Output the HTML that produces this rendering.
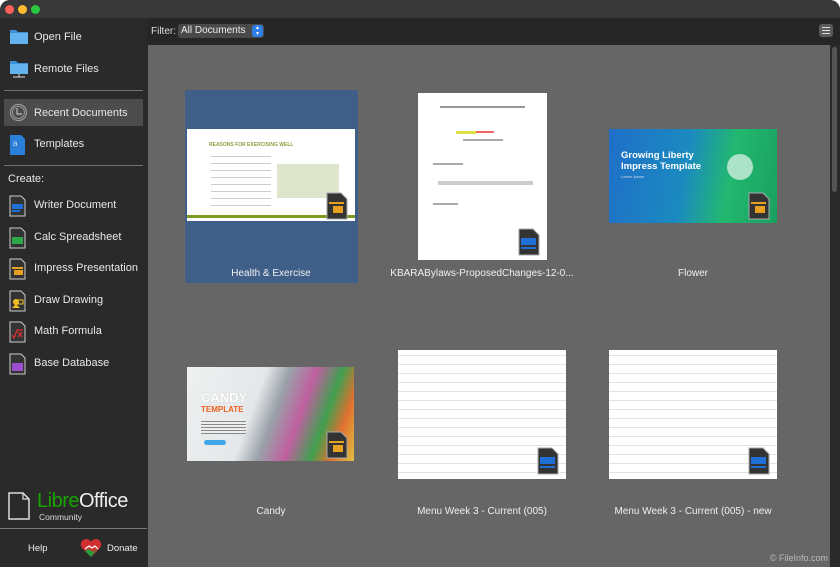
<!DOCTYPE html>
<html><head><style>
*{margin:0;padding:0;box-sizing:border-box}
body{width:840px;height:567px;background:#fff;font-family:"Liberation Sans",sans-serif;overflow:hidden;position:relative}
.win{position:absolute;left:0;top:0;width:840px;height:567px;background:#2a2a2a;border-radius:10px 10px 0 0;overflow:hidden}
.title{position:absolute;left:0;top:0;width:840px;height:18px;background:#383838}
.dot{position:absolute;top:5px;width:9px;height:9px;border-radius:50%}
.side{position:absolute;left:0;top:18px;width:147px;height:549px;background:#2a2a2a}
.it{position:absolute;left:34px;color:#e8e8e8;font-size:11px}
.ic{position:absolute;left:9px}
.sep{position:absolute;left:4px;width:139px;height:1px;background:#707070}
.tb{position:absolute;left:147px;top:18px;width:693px;height:27px;background:#262626}
.main{position:absolute;left:148px;top:45px;width:682px;height:522px;background:#666}
.lbl{position:absolute;color:#f0f0f0;font-size:10px;text-align:center;width:200px}
.page{position:absolute;background:#fff}
.doc{position:absolute;width:22px;height:28px}
.menu{background:repeating-linear-gradient(#fff 0 5px,#e2e2e2 5px 6px,#fff 6px 9px)}
</style></head><body>
<div class="win">
<div class="title">
<div class="dot" style="left:5px;background:#fe5f57"></div>
<div class="dot" style="left:18px;background:#febc2e"></div>
<div class="dot" style="left:31px;background:#28c840"></div>
</div>
<div class="side">
<svg class="ic" style="top:9px" width="20" height="18"><path d="M1 3h6l2 2h10v12H1z" fill="#3d8fd6"/><rect x="1" y="6" width="18" height="11" fill="#64b3ee"/></svg>
<div class="it" style="top:13px">Open File</div>
<svg class="ic" style="top:41px" width="20" height="20"><path d="M1 2h6l2 2h10v11H1z" fill="#3d8fd6"/><rect x="1" y="5" width="18" height="10" fill="#64b3ee"/><path d="M10 15v3M4 18h12" stroke="#ddd" stroke-width="1"/></svg>
<div class="it" style="top:45px">Remote Files</div>
<div class="sep" style="top:72px"></div>
<div style="position:absolute;left:4px;top:81px;width:139px;height:27px;background:#4c4c4c"></div>
<svg class="ic" style="top:85px" width="19" height="19"><circle cx="9.5" cy="9.5" r="8" fill="none" stroke="#999" stroke-width="1.2"/><circle cx="9.5" cy="9.5" r="6" fill="none" stroke="#999" stroke-width="1"/><path d="M8 5v6h5" stroke="#bbb" fill="none" stroke-width="1.2"/></svg>
<div class="it" style="top:89px">Recent Documents</div>
<svg class="ic" style="top:116px" width="18" height="22"><path d="M1 1h11l4 4v16H1z" fill="#2a7fd8"/><text x="4" y="12" font-size="8" fill="#cde">a</text></svg>
<div class="it" style="top:120px">Templates</div>
<div class="sep" style="top:147px"></div>
<div class="it" style="top:155px;left:8px">Create:</div>
<svg class="ic" style="top:177px" width="18" height="22"><path d="M1 1h11l4 4v16H1z" fill="#333" stroke="#ccc"/><rect x="3" y="9" width="11" height="5" fill="#1f6fd6"/><rect x="3" y="15" width="8" height="2" fill="#1f6fd6"/></svg>
<div class="it" style="top:181px">Writer Document</div>
<svg class="ic" style="top:209px" width="18" height="22"><path d="M1 1h11l4 4v16H1z" fill="#333" stroke="#ccc"/><rect x="3" y="10" width="11" height="7" fill="#2fa84a"/></svg>
<div class="it" style="top:213px">Calc Spreadsheet</div>
<svg class="ic" style="top:240px" width="18" height="22"><path d="M1 1h11l4 4v16H1z" fill="#333" stroke="#ccc"/><rect x="3" y="9" width="11" height="2" fill="#e8a020"/><rect x="5" y="12" width="9" height="5" fill="#e8a020"/></svg>
<div class="it" style="top:244px">Impress Presentation</div>
<svg class="ic" style="top:272px" width="18" height="22"><path d="M1 1h11l4 4v16H1z" fill="#333" stroke="#ccc"/><circle cx="7" cy="12" r="3" fill="#f0c020"/><path d="M3 18l4-4 4 4z" fill="#f0c020"/><rect x="9" y="10" width="5" height="4" fill="none" stroke="#f0c020"/></svg>
<div class="it" style="top:276px">Draw Drawing</div>
<svg class="ic" style="top:303px" width="18" height="22"><path d="M1 1h11l4 4v16H1z" fill="#333" stroke="#ccc"/><path d="M3 14l2 3 3-8h6M9 11l4 5M13 11l-4 5" stroke="#e03030" fill="none" stroke-width="1.3"/></svg>
<div class="it" style="top:307px">Math Formula</div>
<svg class="ic" style="top:335px" width="18" height="22"><path d="M1 1h11l4 4v16H1z" fill="#333" stroke="#ccc"/><rect x="3" y="10" width="11" height="8" fill="#9b4fcf"/></svg>
<div class="it" style="top:339px">Base Database</div>
<svg style="position:absolute;left:8px;top:474px" width="22" height="28"><path d="M1 1h14l6 6v20H1z" fill="none" stroke="#ddd" stroke-width="1.5"/><path d="M15 1v6h6" fill="none" stroke="#ddd" stroke-width="1.2"/></svg>
<div style="position:absolute;left:37px;top:472px;font-size:20px;color:#18a303;letter-spacing:-0.5px">Libre<span style="color:#eee">Office</span></div>
<div style="position:absolute;left:39px;top:494px;font-size:8.5px;color:#ddd">Community</div>
<div class="sep" style="top:510px;left:0;width:147px;background:#777"></div>
<div style="position:absolute;left:28px;top:525px;font-size:9.5px;color:#eee">Help</div>
<svg style="position:absolute;left:80px;top:520px" width="22" height="20"><path d="M11 19L2 10C-1 6 2 1 6 1c2 0 4 1 5 3 1-2 3-3 5-3 4 0 7 5 4 9z" fill="#d03030"/><path d="M11 19l-6-6 4-2 4 3 5-4z" fill="#2a9a3a"/><path d="M5 11l4-3 3 2 3-2 3 3" stroke="#fff" fill="none" stroke-width="1.2"/></svg>
<div style="position:absolute;left:107px;top:525px;font-size:9.5px;color:#eee">Donate</div>
</div>
<div class="tb">
<div style="position:absolute;left:4px;top:8px;color:#ddd;font-size:10px">Filter:</div>
<div style="position:absolute;left:31px;top:6px;width:86px;height:14px;background:#4a4a4a;border-radius:3px;color:#eee;font-size:10px;padding:1px 0 0 3px">All Documents
<div style="position:absolute;right:1px;top:1px;width:11px;height:12px;background:#2f7fe8;border-radius:3px;color:#fff;font-size:6px;line-height:6px;text-align:center">▴<br>▾</div></div>
<div style="position:absolute;left:672px;top:6px;width:14px;height:13px;background:#5a5a5a;border-radius:3px"><div style="position:absolute;left:3px;top:3px;width:8px;height:7px;border-top:1px solid #ddd;border-bottom:1px solid #ddd"></div><div style="position:absolute;left:3px;top:6px;width:8px;height:1px;background:#ddd"></div></div>
</div>
<div class="main"></div>
<div style="position:absolute;left:830px;top:45px;width:10px;height:522px;background:#2a2a2a"></div>
<div style="position:absolute;left:832px;top:47px;width:5px;height:145px;background:#555;border-radius:3px"></div>

<div style="position:absolute;left:185px;top:90px;width:173px;height:193px;background:#3f5f88;border-radius:2px"></div>
<div class="page" style="left:187px;top:129px;width:168px;height:92px">
<div style="position:absolute;left:22px;top:13px;font-size:5px;color:#8aa040;font-weight:bold">REASONS FOR EXERCISING WELL</div>
<div style="position:absolute;left:24px;top:23px;width:60px;height:60px;background:repeating-linear-gradient(#fff 0 4px,#ccc 4px 5px,#fff 5px 7px)"></div>
<div style="position:absolute;left:90px;top:35px;width:62px;height:34px;background:#dde6cc"></div>
<div style="position:absolute;left:0;top:86px;width:168px;height:3px;background:#7a9a20"></div>
</div>
<svg class="doc" style="left:326px;top:192px"><path d="M1 1h14l6 6v20H1z" fill="#333" stroke="#aaa"/><rect x="3" y="10" width="15" height="2" fill="#e8a020"/><rect x="7" y="14" width="10" height="7" fill="#e8a020"/></svg>
<div class="lbl" style="left:171px;top:268px">Health &amp; Exercise</div>

<div class="page" style="left:418px;top:93px;width:129px;height:167px">
<div style="position:absolute;left:22px;top:13px;width:85px;height:2px;background:#999"></div>
<div style="position:absolute;left:38px;top:38px;width:20px;height:3px;background:#dd4"></div>
<div style="position:absolute;left:58px;top:38px;width:18px;height:2px;background:#e66"></div>
<div style="position:absolute;left:45px;top:46px;width:40px;height:2px;background:#aaa"></div>
<div style="position:absolute;left:15px;top:70px;width:30px;height:2px;background:#aaa"></div>
<div style="position:absolute;left:20px;top:88px;width:95px;height:4px;background:#ccc"></div>
<div style="position:absolute;left:15px;top:110px;width:25px;height:2px;background:#aaa"></div>
</div>
<svg class="doc" style="left:518px;top:228px"><path d="M1 1h14l6 6v20H1z" fill="#333" stroke="#aaa"/><rect x="3" y="10" width="15" height="7" fill="#1f6fd6"/><rect x="3" y="19" width="15" height="2" fill="#1f6fd6"/></svg>
<div class="lbl" style="left:382px;top:268px">KBARABylaws-ProposedChanges-12-0...</div>

<div class="page" style="left:609px;top:129px;width:168px;height:94px;background:linear-gradient(100deg,#1f6fc8 0%,#1b8ac0 45%,#22b870 70%,#1aa060 100%)">
<div style="position:absolute;left:12px;top:21px;font-size:9.5px;color:#fff;font-weight:bold;line-height:11px">Growing Liberty<br>Impress Template</div>
<div style="position:absolute;left:12px;top:45px;font-size:4px;color:#dde">Lorem Ipsum</div>
<div style="position:absolute;left:118px;top:25px;width:26px;height:26px;border-radius:50%;background:#cfeee0;opacity:.8"></div>
</div>
<svg class="doc" style="left:748px;top:192px"><path d="M1 1h14l6 6v20H1z" fill="#333" stroke="#aaa"/><rect x="3" y="10" width="15" height="2" fill="#e8a020"/><rect x="7" y="14" width="10" height="7" fill="#e8a020"/></svg>
<div class="lbl" style="left:593px;top:268px">Flower</div>

<div class="page" style="left:187px;top:367px;width:167px;height:94px;background:linear-gradient(110deg,#eef0f0 0%,#e4e8ea 40%,#9aa0a8 52%,#c060a0 65%,#40a050 78%,#e07030 88%,#e0c040 100%)">
<div style="position:absolute;left:14px;top:23px;font-size:13px;color:#fff;font-weight:bold;text-shadow:0 0 1px #aaa">CANDY</div>
<div style="position:absolute;left:14px;top:38px;font-size:8px;color:#f06020;font-weight:bold">TEMPLATE</div>
<div style="position:absolute;left:14px;top:52px;width:45px;height:15px;background:repeating-linear-gradient(#eee 0 2px,#888 2px 3px)"></div>
<div style="position:absolute;left:17px;top:73px;width:22px;height:5px;background:#40a8e8;border-radius:3px"></div>
</div>
<svg class="doc" style="left:326px;top:431px"><path d="M1 1h14l6 6v20H1z" fill="#333" stroke="#aaa"/><rect x="3" y="10" width="15" height="2" fill="#e8a020"/><rect x="7" y="14" width="10" height="7" fill="#e8a020"/></svg>
<div class="lbl" style="left:171px;top:506px">Candy</div>

<div class="page menu" style="left:398px;top:350px;width:168px;height:129px"></div>
<svg class="doc" style="left:537px;top:447px"><path d="M1 1h14l6 6v20H1z" fill="#333" stroke="#aaa"/><rect x="3" y="10" width="15" height="7" fill="#1f6fd6"/><rect x="3" y="19" width="15" height="2" fill="#1f6fd6"/></svg>
<div class="lbl" style="left:382px;top:506px">Menu Week 3 - Current (005)</div>

<div class="page menu" style="left:609px;top:350px;width:168px;height:129px"></div>
<svg class="doc" style="left:748px;top:447px"><path d="M1 1h14l6 6v20H1z" fill="#333" stroke="#aaa"/><rect x="3" y="10" width="15" height="7" fill="#1f6fd6"/><rect x="3" y="19" width="15" height="2" fill="#1f6fd6"/></svg>
<div class="lbl" style="left:593px;top:506px">Menu Week 3 - Current (005) - new</div>

<div style="position:absolute;right:12px;top:553px;font-size:9px;color:#bbb">© FileInfo.com</div>
</div>
</body></html>
